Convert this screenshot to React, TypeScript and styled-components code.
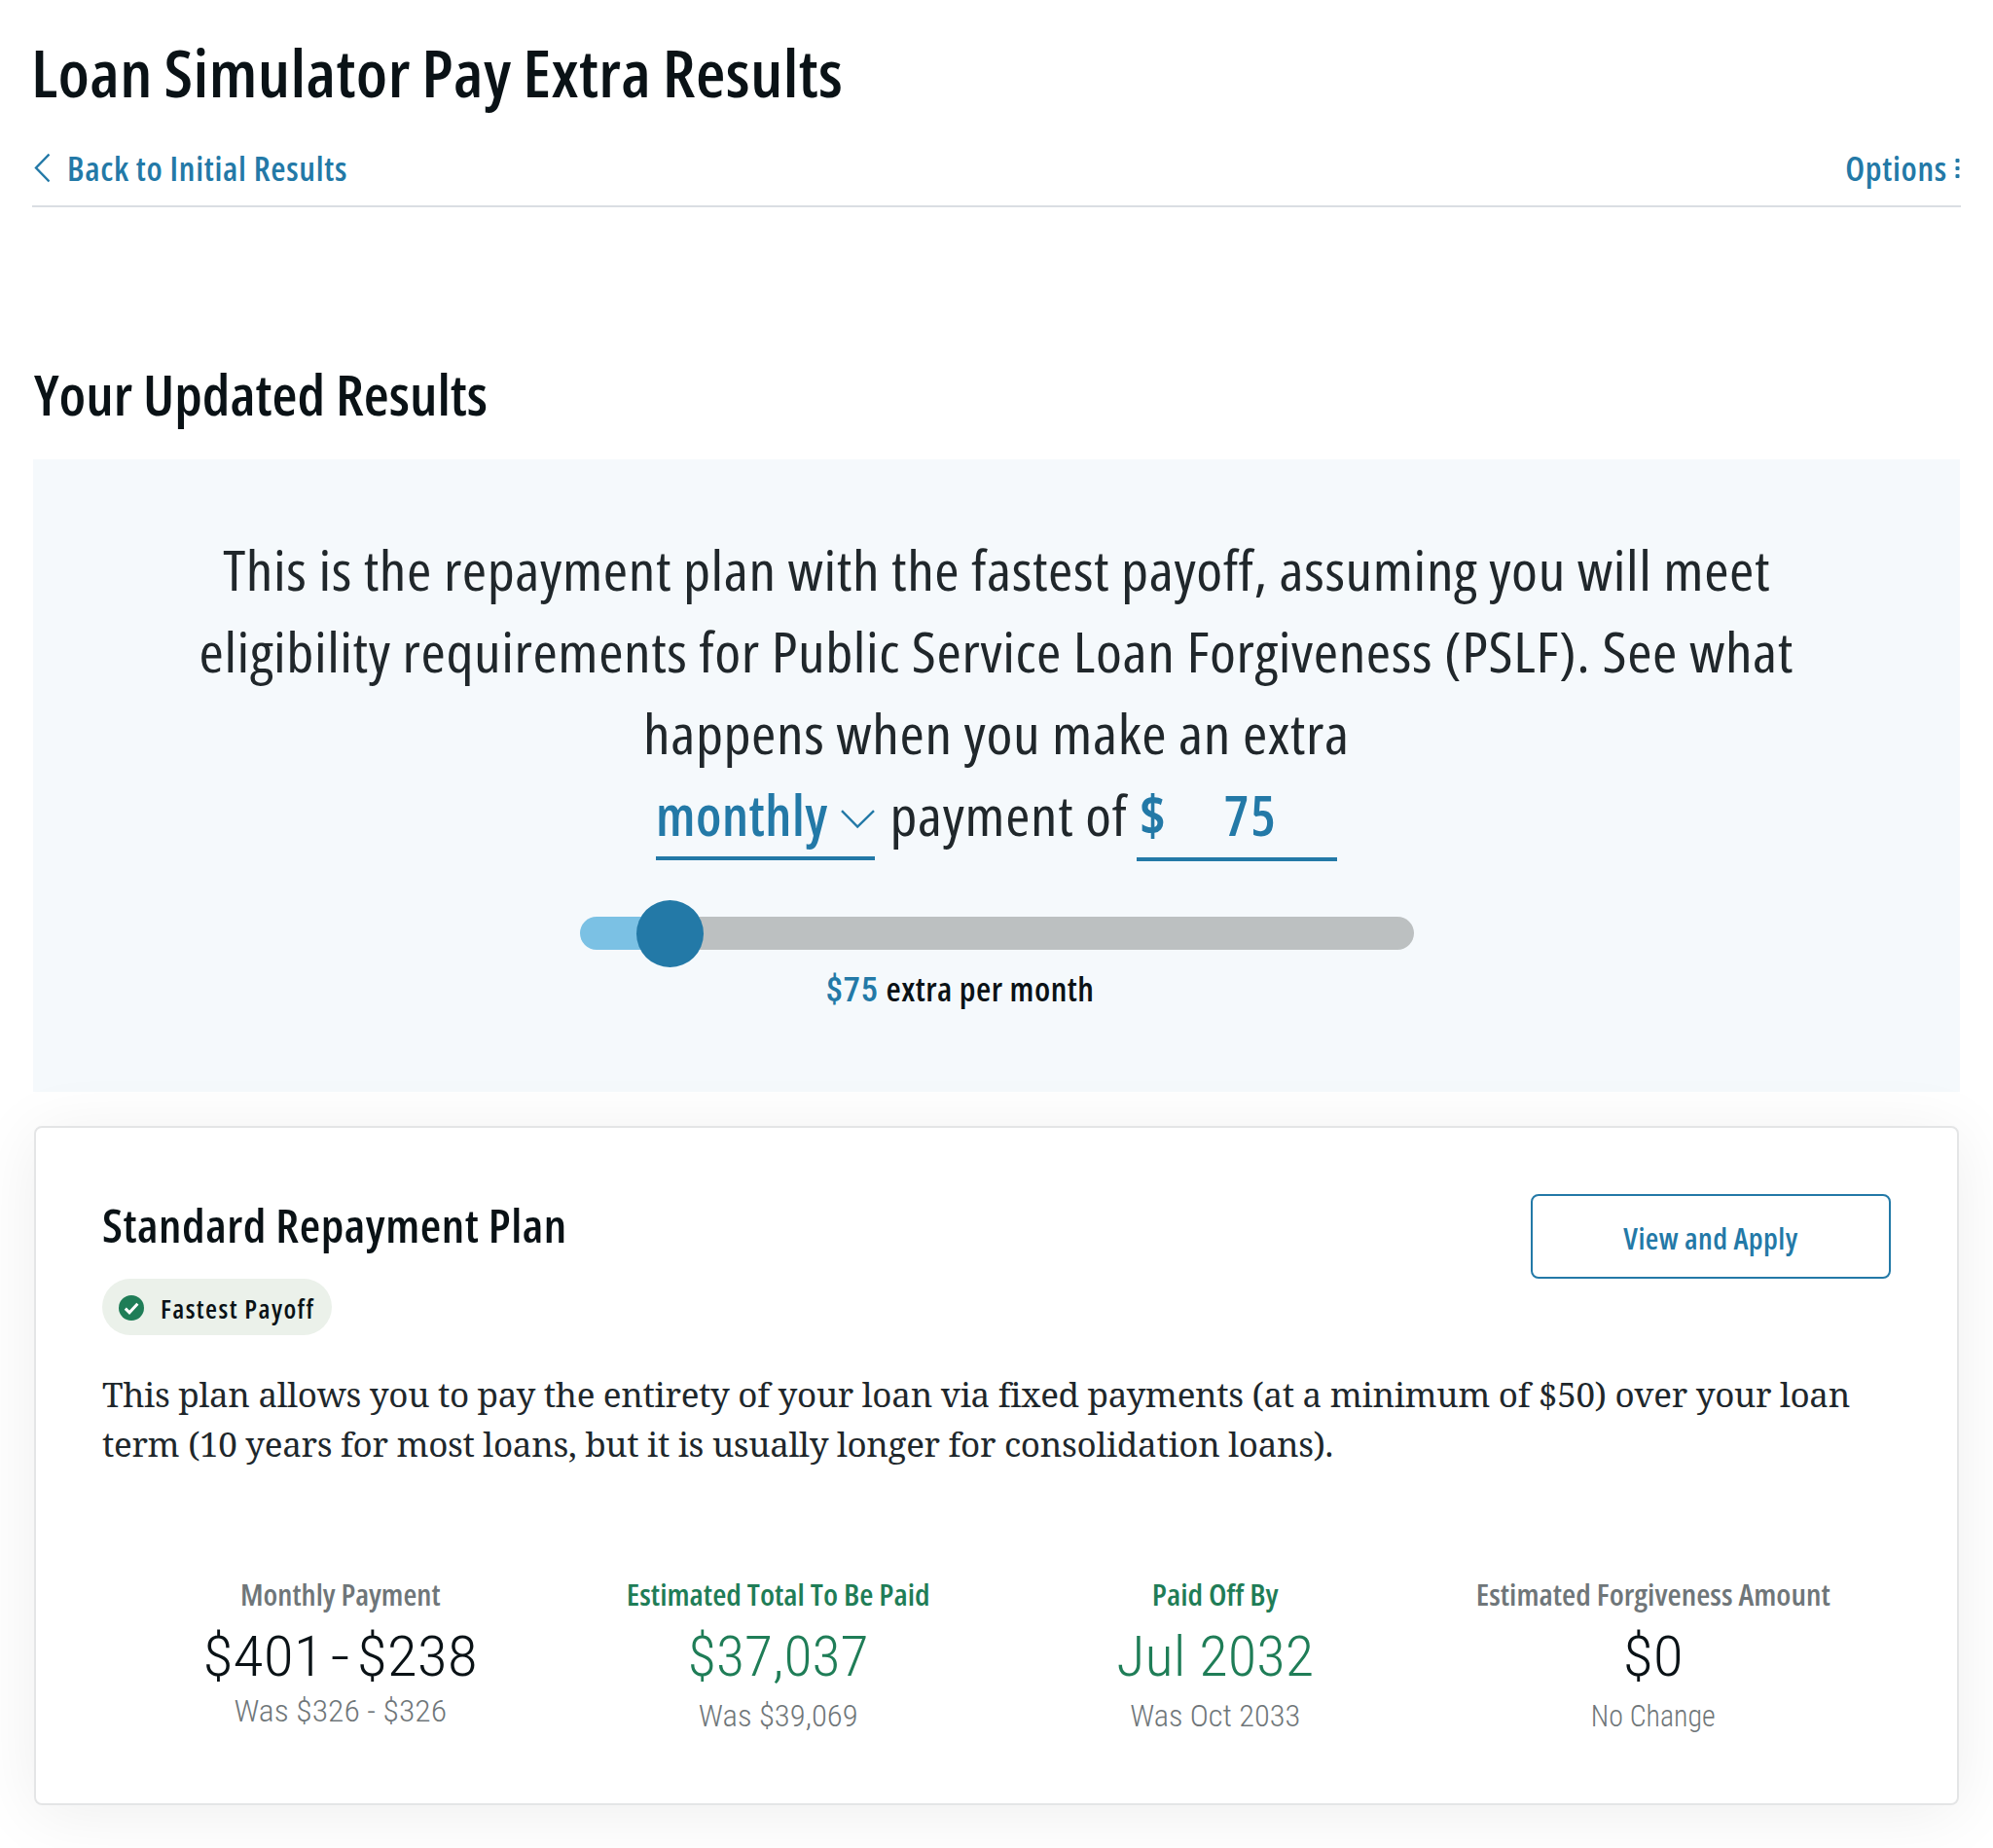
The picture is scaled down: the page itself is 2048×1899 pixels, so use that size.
import React from "react";
import styled, { createGlobalStyle } from "styled-components";

const blue = "#2379a7";
const ink = "#0a1216";
const green = "#1f7d57";
const grey = "#6f7679";
const sans = `"Open Sans", "Liberation Sans", sans-serif`;
const figures = `"Roboto", "Liberation Sans", sans-serif`;

const Global = createGlobalStyle`
  * { box-sizing: border-box; }
  body { margin: 0; background: #fff; font-family: ${sans}; font-stretch: 75%; color: ${ink}; overflow: hidden; }
  h1, h2, h3, p { margin: 0; font-weight: 600; }
  button { font: inherit; font-stretch: 75%; background: none; border: 0; padding: 0; cursor: pointer; }
`;

const Page = styled.main`
  width: 2048px;
  height: 1899px;
  padding: 34px 34px 0;
  overflow: hidden;
`;

const Title = styled.h1`
  width: max-content;
  margin-left: -2px;
  font-size: 66px;
  line-height: 80px;
  letter-spacing: 0.35px;
  word-spacing: -1.5px;
  transform: scaleX(1.06);
  transform-origin: left;
`;

const NavBar = styled.nav`
  display: flex;
  justify-content: space-between;
  align-items: center;
  height: 99px;
  margin: 0 -1px;
  padding: 20px 1px 0;
  border-bottom: 2px solid #dadee3;
`;

const NavLink = styled.button<{ $gap: number }>`
  display: flex;
  align-items: center;
  gap: ${(p) => p.$gap}px;
  font-size: 35px;
  font-weight: 600;
  line-height: 50px;
  letter-spacing: 0.7px;
  color: ${blue};
`;

const SectionTitle = styled.h2`
  width: max-content;
  margin: 156px 0 0 1px;
  font-size: 57.5px;
  line-height: 72px;
  transform: scaleX(1.038);
  transform-origin: left;
`;

const Panel = styled.section`
  margin-top: 31px;
  height: 650px;
  padding-top: 71px;
  background: #f5f9fc;
  color: #20272b;
  display: flex;
  flex-direction: column;
  align-items: center;
`;

const Line = styled.p`
  font-size: 57px;
  font-weight: 400;
  line-height: 84px;
  letter-spacing: 0.55px;
  white-space: nowrap;
  transform: scaleX(1.074);
`;

const Sentence = styled.div`
  display: flex;
  align-items: flex-start;
  justify-content: space-between;
  width: 700px;
  height: 90px;
  font-size: 57px;
  line-height: 84px;
  white-space: nowrap;
`;

const Select = styled.button`
  display: flex;
  align-items: center;
  justify-content: space-between;
  width: 225px;
  height: 89px;
  padding-bottom: 1px;
  border-bottom: 4px solid ${blue};
  color: ${blue};
  font-weight: 600;
  line-height: 84px;
  letter-spacing: 0.5px;

  svg {
    margin-top: 10px;
  }
`;

const Joiner = styled.span`
  margin-left: 7px;
  letter-spacing: 0.7px;
  transform: scaleX(1.065);
`;

const Amount = styled.label`
  display: flex;
  gap: 58px;
  width: 206px;
  height: 90px;
  padding-left: 3px;
  border-bottom: 4px solid ${blue};
  color: ${blue};
  font-weight: 600;
  letter-spacing: 2px;
`;

const Currency = styled.span`
  font-weight: 700;
`;

const Slider = styled.div`
  display: flex;
  align-items: center;
  width: 857px;
  height: 69px;
  margin-top: 39.5px;
`;

const Track = styled.div<{ $filled?: boolean }>`
  height: 34px;
  ${(p) => (p.$filled ? "width: 75px; margin-right: -17px;" : "flex: 1; margin-left: -17px;")}
  border-radius: ${(p) => (p.$filled ? "17px 0 0 17px" : "0 17px 17px 0")};
  background: ${(p) => (p.$filled ? "#7bc1e4" : "#bcc0c1")};
`;

const Thumb = styled.div`
  width: 69px;
  height: 69px;
  border-radius: 50%;
  background: ${blue};
  z-index: 1;
`;

const Caption = styled.p`
  display: flex;
  align-items: baseline;
  gap: 8px;
  margin: 0 75px 0 0;
  font-size: 35px;
  line-height: 44px;
  letter-spacing: 0.5px;
  color: ${ink};
`;

const CaptionValue = styled.span`
  color: ${blue};
  font-family: ${figures};
  font-weight: 500;
`;

const Card = styled.section`
  margin: 35px 1px 0;
  height: 698px;
  padding: 68px 68px 0;
  background: #fff;
  border: 2px solid #e4e5e6;
  border-radius: 8px;
  box-shadow: 0 8px 70px rgba(0, 0, 0, 0.07);
`;

const CardHead = styled.div`
  display: flex;
  justify-content: space-between;
  align-items: flex-start;
`;

const PlanName = styled.h3`
  width: max-content;
  margin-top: 2px;
  font-size: 47px;
  line-height: 60px;
  letter-spacing: 0.5px;
  transform: scaleX(1.048);
  transform-origin: left;
`;

const Badge = styled.div`
  display: inline-flex;
  align-items: center;
  gap: 17px;
  height: 58px;
  margin-top: 25px;
  padding: 2px 18px 0 17px;
  border-radius: 29px;
  background: #ebf1ea;
  font-size: 27.5px;
  font-weight: 600;
  letter-spacing: 1.4px;
`;

const ApplyButton = styled.button`
  width: 370px;
  height: 87px;
  padding-top: 3px;
  border: 2px solid ${blue};
  border-radius: 8px;
  color: ${blue};
  font-size: 31px;
  font-weight: 600;
  letter-spacing: 0.4px;
`;

const Description = styled.p`
  margin-top: 35px;
  font-family: "Noto Serif", "DejaVu Serif", serif;
  font-stretch: 100%;
  font-size: 35px;
  font-weight: 400;
  line-height: 51.3px;
  letter-spacing: -0.31px;
  color: #20272b;
  white-space: nowrap;
`;

const Stats = styled.div`
  display: grid;
  grid-template-columns: repeat(4, 1fr);
  margin: 108px 20px 0;
  text-align: center;
  white-space: nowrap;
`;

const StatLabel = styled.div<{ $good?: boolean; $stretch?: number }>`
  font-size: 31px;
  font-weight: 600;
  line-height: 40px;
  color: ${(p) => (p.$good ? green : grey)};
  transform: scaleX(${(p) => p.$stretch ?? 1.05});
`;

const StatValue = styled.div<{ $good?: boolean; $stretch: number }>`
  margin-top: 11px;
  font-family: ${figures};
  font-size: 58px;
  font-weight: 300;
  line-height: 66px;
  color: ${(p) => (p.$good ? green : ink)};
  transform: scaleX(${(p) => p.$stretch});
`;

const Dash = styled.span`
  display: inline-block;
  margin: 0 8px;
  transform: scaleX(1.25);
`;

const StatNote = styled.div<{ $tight?: boolean; $stretch: number }>`
  margin-top: ${(p) => (p.$tight ? 4 : 9)}px;
  font-family: ${figures};
  font-size: 31px;
  font-weight: 300;
  line-height: 40px;
  color: ${grey};
  transform: scaleX(${(p) => p.$stretch});
`;

const stats = [
  {
    label: "Monthly Payment",
    labelStretch: 1.025,
    value: <>$401<Dash>-</Dash>$238</>,
    valueStretch: 1.1,
    note: "Was $326 - $326",
    noteStretch: 1.085,
    tight: true,
  },
  { label: "Estimated Total To Be Paid", value: "$37,037", valueStretch: 1.03, note: "Was $39,069", noteStretch: 1.055, good: true },
  { label: "Paid Off By", value: "Jul 2032", valueStretch: 1.045, note: "Was Oct 2033", noteStretch: 1.045, good: true },
  { label: "Estimated Forgiveness Amount", value: "$0", valueStretch: 1.1, note: "No Change", noteStretch: 0.965 },
];

const BackIcon = () => (
  <svg width="17" height="31" viewBox="0 0 17 31" fill="none" stroke={blue} strokeWidth="2.4">
    <path d="M16.5 1.5 3 15.5l13.5 14" />
  </svg>
);

const MoreIcon = () => (
  <svg width="5" height="22" viewBox="0 0 5 22" fill={blue}>
    <rect x="0.5" y="1" width="4" height="4" rx="1" />
    <rect x="0.5" y="9" width="4" height="4" rx="1" />
    <rect x="0.5" y="17" width="4" height="4" rx="1" />
  </svg>
);

const DownIcon = () => (
  <svg width="35" height="20" viewBox="0 0 35 20" fill="none" stroke={blue} strokeWidth="2.4">
    <path d="M1 1.2 17.2 17.6 34 1.2" />
  </svg>
);

const CheckIcon = () => (
  <svg width="26" height="26" viewBox="0 0 26 26">
    <circle cx="13" cy="13" r="13" fill={green} />
    <path d="M6.8 13.6 11 17.8 19.4 8.8" fill="none" stroke="#fff" strokeWidth="3" />
  </svg>
);

export default function App() {
  return (
    <>
      <Global />
      <Page>
        <Title>Loan Simulator Pay Extra Results</Title>
        <NavBar>
          <NavLink $gap={18}>
            <BackIcon />
            Back to Initial Results
          </NavLink>
          <NavLink $gap={8}>
            Options
            <MoreIcon />
          </NavLink>
        </NavBar>
        <SectionTitle>Your Updated Results</SectionTitle>
        <Panel>
          <Line>This is the repayment plan with the fastest payoff, assuming you will meet</Line>
          <Line>eligibility requirements for Public Service Loan Forgiveness (PSLF). See what</Line>
          <Line>happens when you make an extra</Line>
          <Sentence>
            <Select>
              monthly
              <DownIcon />
            </Select>
            <Joiner>payment of</Joiner>
            <Amount>
              <Currency>$</Currency>
              <span>75</span>
            </Amount>
          </Sentence>
          <Slider>
            <Track $filled />
            <Thumb />
            <Track />
          </Slider>
          <Caption>
            <CaptionValue>$75</CaptionValue>
            <span>extra per month</span>
          </Caption>
        </Panel>
        <Card>
          <CardHead>
            <div>
              <PlanName>Standard Repayment Plan</PlanName>
              <Badge>
                <CheckIcon />
                Fastest Payoff
              </Badge>
            </div>
            <ApplyButton>View and Apply</ApplyButton>
          </CardHead>
          <Description>
            This plan allows you to pay the entirety of your loan via fixed payments (at a minimum of $50) over your loan
            <br />
            term (10 years for most loans, but it is usually longer for consolidation loans).
          </Description>
          <Stats>
            {stats.map((s) => (
              <div key={s.label}>
                <StatLabel $good={s.good} $stretch={s.labelStretch}>{s.label}</StatLabel>
                <StatValue $good={s.good} $stretch={s.valueStretch}>{s.value}</StatValue>
                <StatNote $tight={s.tight} $stretch={s.noteStretch}>{s.note}</StatNote>
              </div>
            ))}
          </Stats>
        </Card>
      </Page>
    </>
  );
}
